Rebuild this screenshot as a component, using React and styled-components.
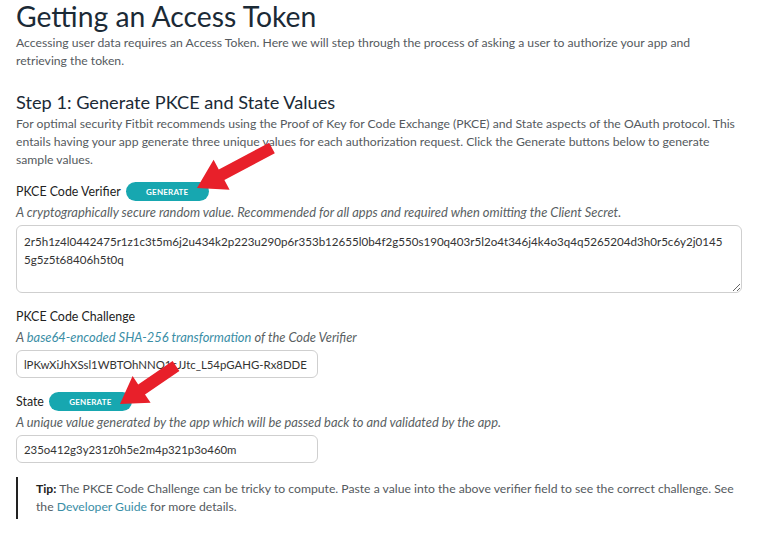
import styled, { createGlobalStyle } from 'styled-components';

const GlobalStyle = createGlobalStyle`
  body {
    margin: 0;
    background: #ffffff;
    font-family: Lato, 'Open Sans', Arial, sans-serif;
  }
  * {
    box-sizing: border-box;
  }
`;

const verifier =
  '2r5h1z4l0442475r1z1c3t5m6j2u434k2p223u290p6r353b12655l0b4f2g550s190q403r5l2o4t346j4k4o3q4q5265204d3h0r5c6y2j0145\n5g5z5t68406h5t0q';

function App() {
  return (
    <Page>
      <GlobalStyle />
      <Title>Getting an Access Token</Title>
      <Lead>
        Accessing user data requires an Access Token. Here we will step through the process of
        asking a user to authorize your app and retrieving the token.
      </Lead>

      <StepTitle>Step 1: Generate PKCE and State Values</StepTitle>
      <Lead>
        For optimal security Fitbit recommends using the Proof of Key for Code Exchange (PKCE) and
        State aspects of the OAuth protocol. This entails having your app generate three unique
        values for each authorization request. Click the Generate buttons below to generate sample
        values.
      </Lead>

      <Field $gap={13}>
        <LabelRow>
          <Label>PKCE Code Verifier</Label>
          <GenerateButton type="button">GENERATE</GenerateButton>
        </LabelRow>
        <Hint>
          A cryptographically secure random value. Recommended for all apps and required when
          omitting the Client Secret.
        </Hint>
        <TextArea defaultValue={verifier} />
      </Field>

      <Field $gap={14}>
        <LabelRow>
          <Label>PKCE Code Challenge</Label>
        </LabelRow>
        <Hint>
          A <Link href="#">base64-encoded SHA-256 transformation</Link> of the Code Verifier
        </Hint>
        <Input defaultValue="lPKwXiJhXSsl1WBTOhNNQ1cJJtc_L54pGAHG-Rx8DDE" />
      </Field>

      <Field $gap={14}>
        <LabelRow>
          <Label>State</Label>
          <GenerateButton type="button">GENERATE</GenerateButton>
        </LabelRow>
        <Hint>
          A unique value generated by the app which will be passed back to and validated by the
          app.
        </Hint>
        <Input defaultValue="235o412g3y231z0h5e2m4p321p3o460m" />
      </Field>

      <Tip>
        <TipText>
          <strong>Tip:</strong> The PKCE Code Challenge can be tricky to compute. Paste a value
          into the above verifier field to see the correct challenge. See the{' '}
          <Link href="#">Developer Guide</Link> for more details.
        </TipText>
      </Tip>

      <Arrows viewBox="0 0 768 536" width="768" height="536">
        <polygon
          fill="#e8202a"
          points="269.2,142.7 218.8,169.5 213.6,159.8 197,188 229.6,189.8 224.4,180.1 274.8,153.3"
        />
        <polygon
          fill="#e8202a"
          points="172.6,361 138.2,384.4 132.6,376.1 120,404 150.6,402.7 145,394.4 179.4,371"
        />
      </Arrows>
    </Page>
  );
}

export default App;

const Page = styled.div`
  position: relative;
  width: 768px;
  height: 536px;
  overflow: hidden;
  padding: 1px 0 0 16px;
`;

const Title = styled.h1`
  margin: 0;
  font-size: 28.3px;
  font-weight: 400;
  line-height: 31px;
  color: #1b2a36;
`;

const Lead = styled.p`
  width: 726px;
  margin: 2px 0 0;
  font-size: 12.2px;
  line-height: 18px;
  color: #555a5e;
`;

const StepTitle = styled.h2`
  margin: 21px 0 0;
  font-size: 18.2px;
  font-weight: 400;
  line-height: 22px;
  color: #1b2a36;
`;

const Field = styled.div`
  margin-top: ${(p) => p.$gap}px;
  display: flex;
  flex-direction: column;
`;

const LabelRow = styled.div`
  display: flex;
  align-items: center;
  min-height: 19px;
`;

const Label = styled.span`
  font-size: 12.4px;
  line-height: 18px;
  color: #222;
`;

const GenerateButton = styled.button`
  margin-left: 5px;
  width: 83px;
  height: 19px;
  border: none;
  border-radius: 10px;
  background: #17a7b0;
  color: #fff;
  font-family: Lato, Arial, sans-serif;
  font-size: 8px;
  font-weight: 700;
  letter-spacing: 0.2px;
  padding: 0;
`;

const Hint = styled.p`
  margin: 2px 0 4px;
  font-size: 12.9px;
  line-height: 18px;
  font-style: italic;
  color: #5a5f63;
`;

const Link = styled.a`
  color: #3a8ea6;
  text-decoration: none;
`;

const TextArea = styled.textarea`
  width: 726px;
  height: 68px;
  padding: 7px 7px;
  border: 1px solid #cfcfcf;
  border-radius: 6px;
  font-family: Lato, Arial, sans-serif;
  font-size: 11.6px;
  line-height: 18px;
  color: #333;
  resize: vertical;
  outline: none;
`;

const Input = styled.input`
  width: 302px;
  height: 28px;
  padding: 0 7px;
  border: 1px solid #cfcfcf;
  border-radius: 6px;
  font-family: Lato, Arial, sans-serif;
  font-size: 11.4px;
  color: #333;
  outline: none;
`;

const Tip = styled.blockquote`
  width: 726px;
  margin: 14px 0 0;
  padding: 3px 0 3px 18px;
  border-left: 2px solid #222;
`;

const TipText = styled.p`
  margin: 0;
  font-size: 12.2px;
  line-height: 18px;
  color: #555a5e;

  strong {
    color: #222;
    font-weight: 700;
  }
`;

const Arrows = styled.svg`
  position: absolute;
  left: 0;
  top: 0;
  pointer-events: none;
`;
